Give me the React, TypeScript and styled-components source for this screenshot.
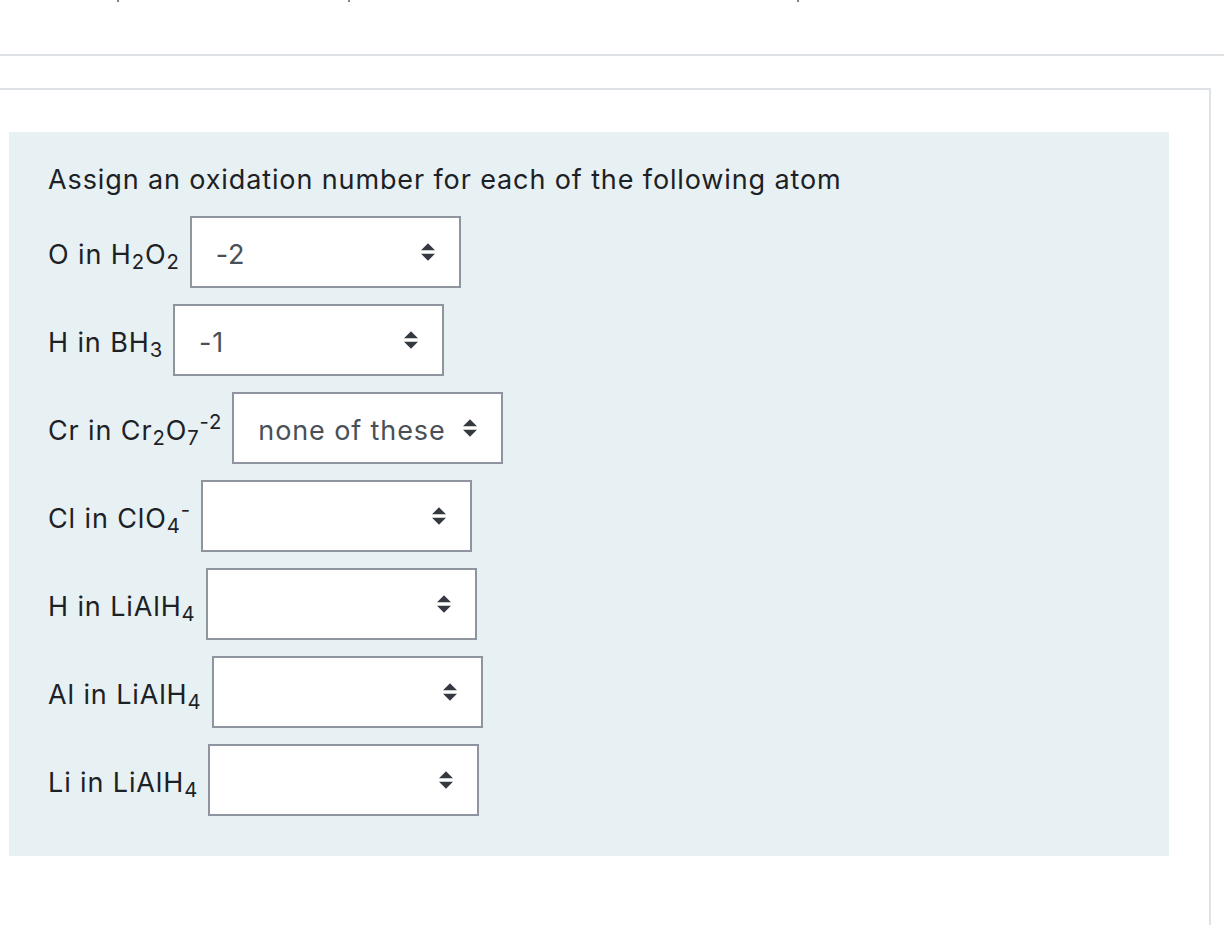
import * as React from 'react'
import styled, { createGlobalStyle } from 'styled-components'

const GlobalStyle = createGlobalStyle`
  html, body {
    margin: 0;
    padding: 0;
    background: #ffffff;
  }
  body {
    font-family: Inter, "Noto Sans", "Liberation Sans", sans-serif;
    letter-spacing: 0.88px;
    color: #1d2125;
  }
`

const Page = styled.div`
  min-height: 925px;
  display: flex;
  flex-direction: column;
  overflow: hidden;
`

const TopStrip = styled.div`
  height: 54px;
  display: flex;
  align-items: flex-start;
`

const Tick = styled.span<{ $gap: number }>`
  display: block;
  width: 2px;
  height: 2px;
  margin-left: ${(p) => p.$gap}px;
  background: #7d848c;
`

const Divider = styled.div`
  height: 2px;
  background: #dee2e6;
  margin-bottom: 32px;
`

const Card = styled.section`
  flex: 1;
  width: 1211px;
  box-sizing: border-box;
  border-top: 2px solid #dee2e6;
  border-right: 2px solid #dee2e6;
  padding: 42px 40px 0 9px;
`

const Formulation = styled.div`
  background: #e7f1f4;
  padding: 28px 39px 40px;
`

const QuestionText = styled.p`
  margin: 0 0 16px;
  font-size: 27px;
  line-height: 40px;
`

const Rows = styled.div`
  display: flex;
  flex-direction: column;
  gap: 16px;
`

const Row = styled.div`
  display: flex;
  align-items: baseline;
  gap: 10px;
`

const Label = styled.label`
  font-size: 27px;
  line-height: 40px;
  white-space: nowrap;

  sub,
  sup {
    font-size: 75%;
    line-height: 0;
    position: relative;
    vertical-align: baseline;
  }
  sub {
    bottom: -0.25em;
  }
  sup {
    top: -0.5em;
  }
`

const SelectWrap = styled.div`
  position: relative;
  width: 271px;
  height: 72px;
  display: flex;
`

const Select = styled.select`
  appearance: none;
  -webkit-appearance: none;
  width: 100%;
  height: 100%;
  box-sizing: border-box;
  margin: 0;
  border: 2px solid #8f959e;
  border-radius: 0;
  background: #ffffff;
  padding: 4px 50px 0 24px;
  font-family: Inter, "Noto Sans", "Liberation Sans", sans-serif;
  font-size: 27px;
  letter-spacing: 0.88px;
  color: #495057;
  outline: none;
`

const Caret = styled.svg`
  position: absolute;
  right: 26px;
  top: 50%;
  transform: translateY(-50%);
  pointer-events: none;
`

const options = ['', '-2', '-1', '0', '+1', '+2', '+3', '+4', '+5', '+6', '+7', 'none of these']

type Item = { label: React.ReactNode; value: string }

const items: Item[] = [
  { label: <>O in H<sub>2</sub>O<sub>2</sub></>, value: '-2' },
  { label: <>H in BH<sub>3</sub></>, value: '-1' },
  { label: <>Cr in Cr<sub>2</sub>O<sub>7</sub><sup>-2</sup></>, value: 'none of these' },
  { label: <>Cl in ClO<sub>4</sub><sup>-</sup></>, value: '' },
  { label: <>H in LiAlH<sub>4</sub></>, value: '' },
  { label: <>Al in LiAlH<sub>4</sub></>, value: '' },
  { label: <>Li in LiAlH<sub>4</sub></>, value: '' },
]

function OxidationSelect({ id, value }: { id: string; value: string }) {
  return (
    <SelectWrap>
      <Select id={id} defaultValue={value}>
        {options.map((o) => (
          <option key={o || 'blank'} value={o}>
            {o}
          </option>
        ))}
      </Select>
      <Caret width="14" height="18" viewBox="0 0 4 5" aria-hidden="true">
        <path d="M2 0L0 2h4zm0 5L0 3h4z" fill="#343a40" />
      </Caret>
    </SelectWrap>
  )
}

export default function App() {
  return (
    <Page>
      <GlobalStyle />
      <TopStrip>
        <Tick $gap={117} />
        <Tick $gap={229} />
        <Tick $gap={447} />
      </TopStrip>
      <Divider />
      <Card>
        <Formulation>
          <QuestionText>Assign an oxidation number for each of the following atom</QuestionText>
          <Rows>
            {items.map((it, i) => (
              <Row key={i}>
                <Label htmlFor={`ox-${i}`}>{it.label}</Label>
                <OxidationSelect id={`ox-${i}`} value={it.value} />
              </Row>
            ))}
          </Rows>
        </Formulation>
      </Card>
    </Page>
  )
}
